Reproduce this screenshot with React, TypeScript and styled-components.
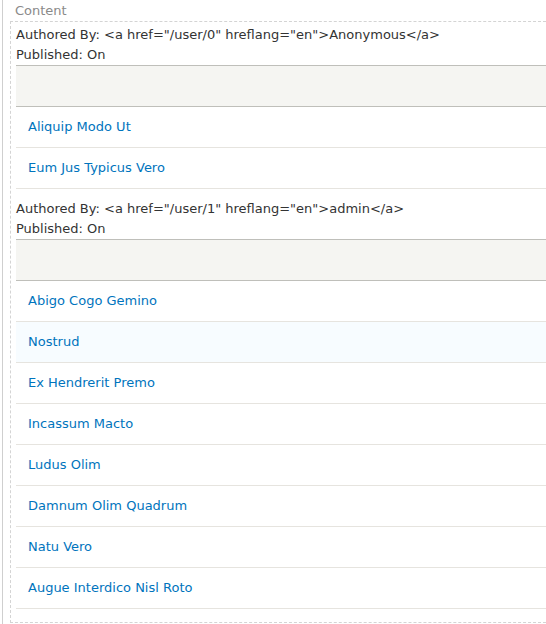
import React from 'react'
import styled, { createGlobalStyle } from 'styled-components'

const GlobalStyle = createGlobalStyle`
  html, body {
    margin: 0;
    padding: 0;
    background: #fff;
  }
  body {
    font-family: "DejaVu Sans", "Liberation Sans", sans-serif;
    font-size: 13px;
    line-height: 20px;
    color: #333;
  }
`

const Frame = styled.div`
  margin-left: 2px;
  padding-left: 7px;
  border-left: 1px solid #cfcfcf;
  min-height: 624px;
  box-sizing: border-box;
`

const Label = styled.div`
  padding: 1px 0 0 5px;
  height: 20px;
  color: #8a8a8a;
`

const Region = styled.div`
  border: 1px dashed #d4d4d4;
  border-right: none;
  padding: 3px 0 3px 5px;
`

const GroupTitle = styled.div`
  line-height: 20px;
`

const Table = styled.table`
  width: 100%;
  border-collapse: collapse;
  margin: 0 0 10px;
`

const HeadCell = styled.th`
  height: 20px;
  padding: 10px 12px;
  background: #f5f5f2;
  border-top: 1px solid #bfbfba;
  border-bottom: 1px solid #bfbfba;
`

const Row = styled.tr<{ $active?: boolean }>`
  background: ${(p) => (p.$active ? '#f7fcff' : '#fff')};
  border-bottom: 1px solid #e6e4df;
`

const Cell = styled.td`
  padding: 10px 12px;
  line-height: 20px;
`

const Link = styled.a`
  color: #0074bd;
  text-decoration: none;
`

interface Group {
  author: string
  items: string[]
  active?: string
}

const groups: Group[] = [
  {
    author: 'Authored By: <a href="/user/0" hreflang="en">Anonymous</a>',
    items: ['Aliquip Modo Ut', 'Eum Jus Typicus Vero'],
  },
  {
    author: 'Authored By: <a href="/user/1" hreflang="en">admin</a>',
    items: [
      'Abigo Cogo Gemino',
      'Nostrud',
      'Ex Hendrerit Premo',
      'Incassum Macto',
      'Ludus Olim',
      'Damnum Olim Quadrum',
      'Natu Vero',
      'Augue Interdico Nisl Roto',
    ],
    active: 'Nostrud',
  },
]

const App: React.FC = () => {
  return (
    <>
      <GlobalStyle />
      <Frame>
        <Label>Content</Label>
        <Region>
          {groups.map((g) => (
            <React.Fragment key={g.author}>
              <GroupTitle>{g.author}</GroupTitle>
              <GroupTitle>Published: On</GroupTitle>
              <Table>
                <thead>
                  <tr>
                    <HeadCell />
                  </tr>
                </thead>
                <tbody>
                  {g.items.map((item) => (
                    <Row key={item} $active={item === g.active}>
                      <Cell>
                        <Link href="#">{item}</Link>
                      </Cell>
                    </Row>
                  ))}
                </tbody>
              </Table>
            </React.Fragment>
          ))}
        </Region>
      </Frame>
    </>
  )
}

export default App
